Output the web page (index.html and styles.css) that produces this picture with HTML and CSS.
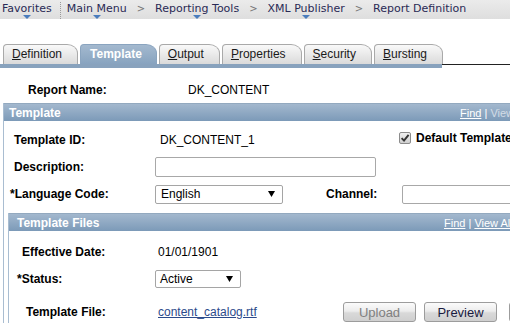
FILE: index.html
```html
<!DOCTYPE html>
<html>
<head>
<meta charset="utf-8">
<link rel="stylesheet" href="styles.css">
</head>
<body>
<div class="crumbs">
  <span class="crumb menu">Favorites</span>
  <span class="sep"></span>
  <span class="crumb menu">Main Menu</span>
  <span class="arrow">&gt;</span>
  <span class="crumb menu">Reporting Tools</span>
  <span class="arrow">&gt;</span>
  <span class="crumb menu">XML Publisher</span>
  <span class="arrow">&gt;</span>
  <span class="crumb">Report Definition</span>
</div>

<div class="tabs">
  <div class="tab"><u>D</u>efinition</div>
  <div class="tab active">Template</div>
  <div class="tab"><u>O</u>utput</div>
  <div class="tab"><u>P</u>roperties</div>
  <div class="tab"><u>S</u>ecurity</div>
  <div class="tab"><u>B</u>ursting</div>
</div>
<div class="tabline"><div class="band"></div><div class="rest"></div></div>

<div class="report">
  <span class="rlabel">Report Name:</span>
  <span>DK_CONTENT</span>
</div>

<div class="box">
  <div class="hdr">
    <span class="title t1">Template</span>
    <span class="links"><a class="lk">Find</a> | <span class="dis">View All</span></span>
  </div>
  <div class="grid">
    <span class="lbl">Template ID:</span>
    <span class="val">DK_CONTENT_1</span>
    <span class="chk-cell"><span class="chk"><svg width="10" height="10" viewBox="0 0 10 10"><path d="M1.6 5.2 L4 7.6 L8.6 1.8" fill="none" stroke="#333" stroke-width="1.9"/></svg></span><span class="lbl2">Default Template</span></span>

    <span class="lbl">Description:</span>
    <span class="inp desc"></span>
    <span></span>
    <span></span>

    <span class="lbl ast">*Language Code:</span>
    <span class="select lang"><span>English</span><svg width="7" height="6" viewBox="0 0 7 6"><polygon points="0,0 7,0 3.5,6" fill="#000"/></svg></span>
    <span class="lbl ch">Channel:</span>
    <span class="inp chan"></span>
  </div>

  <div class="box inner">
    <div class="hdr">
      <span class="title t2">Template Files</span>
      <span class="links"><a class="lk">Find</a> | <a class="lk">View All</a></span>
    </div>
    <div class="row r1">
      <span class="flbl p13">Effective Date:</span>
      <span class="fval">01/01/1901</span>
    </div>
    <div class="row r2">
      <span class="flbl p8">*Status:</span>
      <span class="select status"><span>Active</span><svg width="7" height="6" viewBox="0 0 7 6"><polygon points="0,0 7,0 3.5,6" fill="#000"/></svg></span>
    </div>
    <div class="row r3">
      <span class="flbl p17">Template File:</span>
      <span class="fcell"><a class="file">content_catalog.rtf</a></span>
      <span class="btn disabled">Upload</span>
      <span class="btn">Preview</span>
      <span class="btn third">Download</span>
    </div>
  </div>
</div>
</body>
</html>
```

FILE: styles.css
```css
html, body {
  margin: 0;
  padding: 0;
  overflow: hidden;
}
body {
  width: 510px;
  height: 331px;
  background: #fff;
  color: #000;
  font-family: "Liberation Sans", Arial, sans-serif;
  font-size: 12px;
}

/* breadcrumb bar */
.crumbs {
  height: 19px;
  display: flex;
  align-items: stretch;
  padding-left: 2px;
  background: linear-gradient(#ebebeb, #dedede);
  font-family: "DejaVu Sans", sans-serif;
  font-size: 11px;
  color: #2a2a55;
  white-space: nowrap;
}
.crumb {
  position: relative;
  line-height: 18px;
}
.crumb.menu::after {
  content: "";
  position: absolute;
  left: 50%;
  bottom: 0;
  margin-left: -4px;
  border-left: 4px solid transparent;
  border-right: 4px solid transparent;
  border-top: 4px solid #4a7cbd;
}
.sep {
  width: 0;
  margin: 2px 6px 0 8px;
  border-left: 1px dotted #9a9a9a;
}
.arrow {
  line-height: 18px;
  color: #777;
  font-size: 10px;
  margin: 0 10px 0 10px;
}

/* tabs */
.tabs {
  display: flex;
  gap: 2px;
  margin-top: 25px;
  padding-left: 3px;
  height: 20px;
  align-items: flex-end;
}
.tab {
  height: 19px;
  line-height: 19px;
  padding: 0 15px 0 8px;
  border: 1px solid #a9a9a9;
  border-bottom: none;
  border-radius: 4px 11px 0 0 / 4px 9px 0 0;
  background: linear-gradient(#f9f9f9, #dadada);
  color: #1a1a1a;
}
.tab.active {
  padding: 0 14px 0 9px;
  background: linear-gradient(#a4b9cf, #87a3bf);
  border-color: #8aa4bf;
  color: #fff;
  font-weight: bold;
}
.tabline {
  display: flex;
  height: 4px;
}
.band {
  width: 442px;
  background: #88a2bd;
}
.rest {
  flex: 1;
  border-top: 1px solid #222;
}

/* report name */
.report {
  display: flex;
  align-items: center;
  height: 22px;
  margin-top: 11px;
  padding-left: 28px;
}
.rlabel {
  width: 160px;
  font-weight: bold;
}

/* group boxes */
.box {
  margin: 2px 0 0 3px;
  width: 620px;
  border-left: 1px solid #a9bdd1;
}
.box.inner {
  margin: 8px 0 0 4px;
  width: 600px;
}
.hdr {
  height: 18px;
  display: flex;
  align-items: center;
  background: linear-gradient(#a3b8ce, #7c9ab8);
  border-top: 1px solid #93a9bf;
  box-sizing: border-box;
  color: #fff;
  font-weight: bold;
  white-space: nowrap;
}
.title.t1 {
  width: 451px;
  padding-left: 5px;
}
.title.t2 {
  width: 427px;
  padding-left: 8px;
}
.links {
  font-size: 11px;
  font-weight: normal;
  color: #fff;
}
.lk {
  color: #fff;
  text-decoration: underline;
}
.dis {
  color: #d2dce6;
}

/* template grid */
.grid {
  display: grid;
  grid-template-columns: 151px 171px 76px 1fr;
  grid-auto-rows: 22px;
  row-gap: 5px;
  align-items: center;
  padding-top: 8px;
}
.lbl {
  font-weight: bold;
  padding-left: 10px;
}
.lbl.ast {
  padding-left: 6px;
}
.lbl.ch {
  padding-left: 0;
}
.lbl2 {
  font-weight: bold;
}
.val {
  padding-left: 5px;
}
.chk-cell {
  grid-column: 3 / span 2;
  display: flex;
  align-items: center;
  gap: 5px;
  padding-left: 73px;
  margin-top: -4px;
}
.chk {
  width: 12px;
  height: 12px;
  box-sizing: border-box;
  border: 1px solid #8c8c8c;
  border-radius: 2px;
  background: linear-gradient(#f0f0f0, #cfcfcf);
  display: flex;
  align-items: center;
  justify-content: center;
}
.inp {
  height: 20px;
  box-sizing: border-box;
  border: 1px solid #a8a8a8;
  border-radius: 2px;
  background: #fff;
}
.inp.desc {
  width: 221px;
}
.inp.chan {
  width: 160px;
  height: 19px;
}
.select {
  height: 19px;
  box-sizing: border-box;
  border: 1px solid #a5a5a5;
  border-radius: 2px;
  background: #fff;
  display: flex;
  align-items: center;
  justify-content: space-between;
  padding: 0 7px 0 5px;
}
.select.lang {
  width: 128px;
}
.select.status {
  width: 86px;
  height: 18px;
  padding-left: 4px;
}

/* template files rows */
.row {
  display: flex;
  align-items: center;
  height: 22px;
}
.row.r1 { margin-top: 10px; }
.row.r2 { margin-top: 5px; }
.row.r3 { margin-top: 11px; }
.flbl {
  width: 146px;
  box-sizing: border-box;
  font-weight: bold;
}
.p13 { padding-left: 13px; }
.p8 { padding-left: 8px; }
.p17 { padding-left: 17px; }
.fval {
  padding-left: 3px;
}
.fcell {
  width: 188px;
  box-sizing: border-box;
  padding-left: 3px;
}
.file {
  color: #2b4a8b;
  text-decoration: underline;
}
.btn {
  width: 73px;
  height: 20px;
  box-sizing: border-box;
  border: 1px solid #9c9c9c;
  border-radius: 3px;
  background: linear-gradient(#fbfbfb 0%, #ececec 45%, #d9d9d9 55%, #cfcfcf 100%);
  display: flex;
  align-items: center;
  justify-content: center;
  color: #1a1a40;
  font-size: 13px;
  margin-right: 8px;
}
.btn.disabled {
  color: #808080;
}
.btn.third {
  margin-left: 4px;
}
```
